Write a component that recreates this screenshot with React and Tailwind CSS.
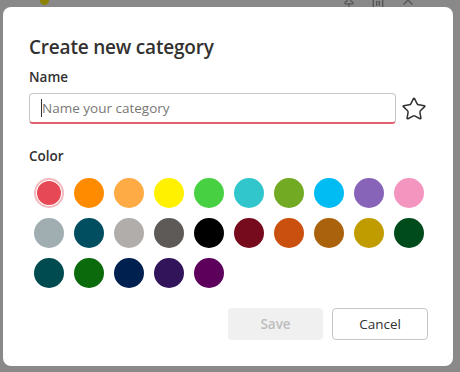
import { Star, Pin, Trash2, ChevronUp } from "lucide-react";

const colors = [
    "#e74856", "#ff8c00", "#ffab45", "#fff100", "#47d041", "#30c6cc", "#73aa24", "#00bcf2", "#8764b8", "#f495bf",
    "#a0aeb2", "#004e60", "#b1adab", "#5d5a58", "#000000", "#750b1c", "#ca5010", "#ab620d", "#c19c00", "#004b1c",
    "#004b50", "#0b6a0b", "#002050", "#32145a", "#5c005c",
];

function Swatch({ color, selected }) {
    if (selected) {
        return (
            <div className="w-[30px] h-[30px] rounded-full border-2 border-[#f2b9be] flex items-center justify-center">
                <div className="w-6 h-6 rounded-full" style={{ backgroundColor: color }} />
            </div>
        );
    }
    return <div className="w-[30px] h-[30px] rounded-full" style={{ backgroundColor: color }} />;
}

export default function App() {
    return (
        <div className="relative w-[460px] h-[372px] bg-[#898989] overflow-hidden font-['Open_Sans',sans-serif] text-[#323130]">
            {/* things behind the overlay */}
            <div className="absolute left-[40px] -top-[4px] w-[9px] h-[9px] rounded-full bg-[#8a8200]" />
            <div className="absolute left-[342px] -top-[6px] flex gap-[14px] text-[#555]">
                <Pin size={14} />
                <Trash2 size={16} />
                <ChevronUp size={16} />
            </div>

            <div className="absolute left-[3px] top-[7px] w-[450px] h-[359px] bg-white rounded-lg pl-[26px] pr-[25px] pt-[26px]">
                <h1 className="text-[19px] font-semibold leading-7 tracking-[-0.2px]">Create new category</h1>

                <div className="mt-[6px] text-[13.5px] font-semibold leading-5">Name</div>
                <div className="mt-[6px] flex items-center gap-[5px]">
                    <div className="w-[367px] h-[31px] border border-[#c8c6c4] border-b-2 border-b-[#e0606e] rounded-[4px] flex items-center px-[11px]">
                        <span className="w-px h-[18px] bg-[#323130]" />
                        <span className="text-[13.5px] text-[#797775]">Name your category</span>
                    </div>
                    <Star size={26} strokeWidth={1.4} className="text-[#323130]" />
                </div>

                <div className="mt-[22px] text-[13.5px] font-semibold leading-5">Color</div>
                <div className="mt-[12px] ml-[5px] grid grid-cols-10 gap-[10px] w-[390px]">
                    {colors.map((c, i) => (
                        <Swatch key={i} color={c} selected={i === 0} />
                    ))}
                </div>

                <div className="mt-[20px] flex justify-end gap-[9px]">
                    <button className="w-[95px] h-[32px] rounded-[4px] bg-[#f0f0f0] text-[#bdbdbd] text-[13.5px] font-semibold">Save</button>
                    <button className="w-[96px] h-[32px] rounded-[4px] border border-[#c8c6c4] text-[13.5px] text-[#323130]">Cancel</button>
                </div>
            </div>
        </div>
    );
}
